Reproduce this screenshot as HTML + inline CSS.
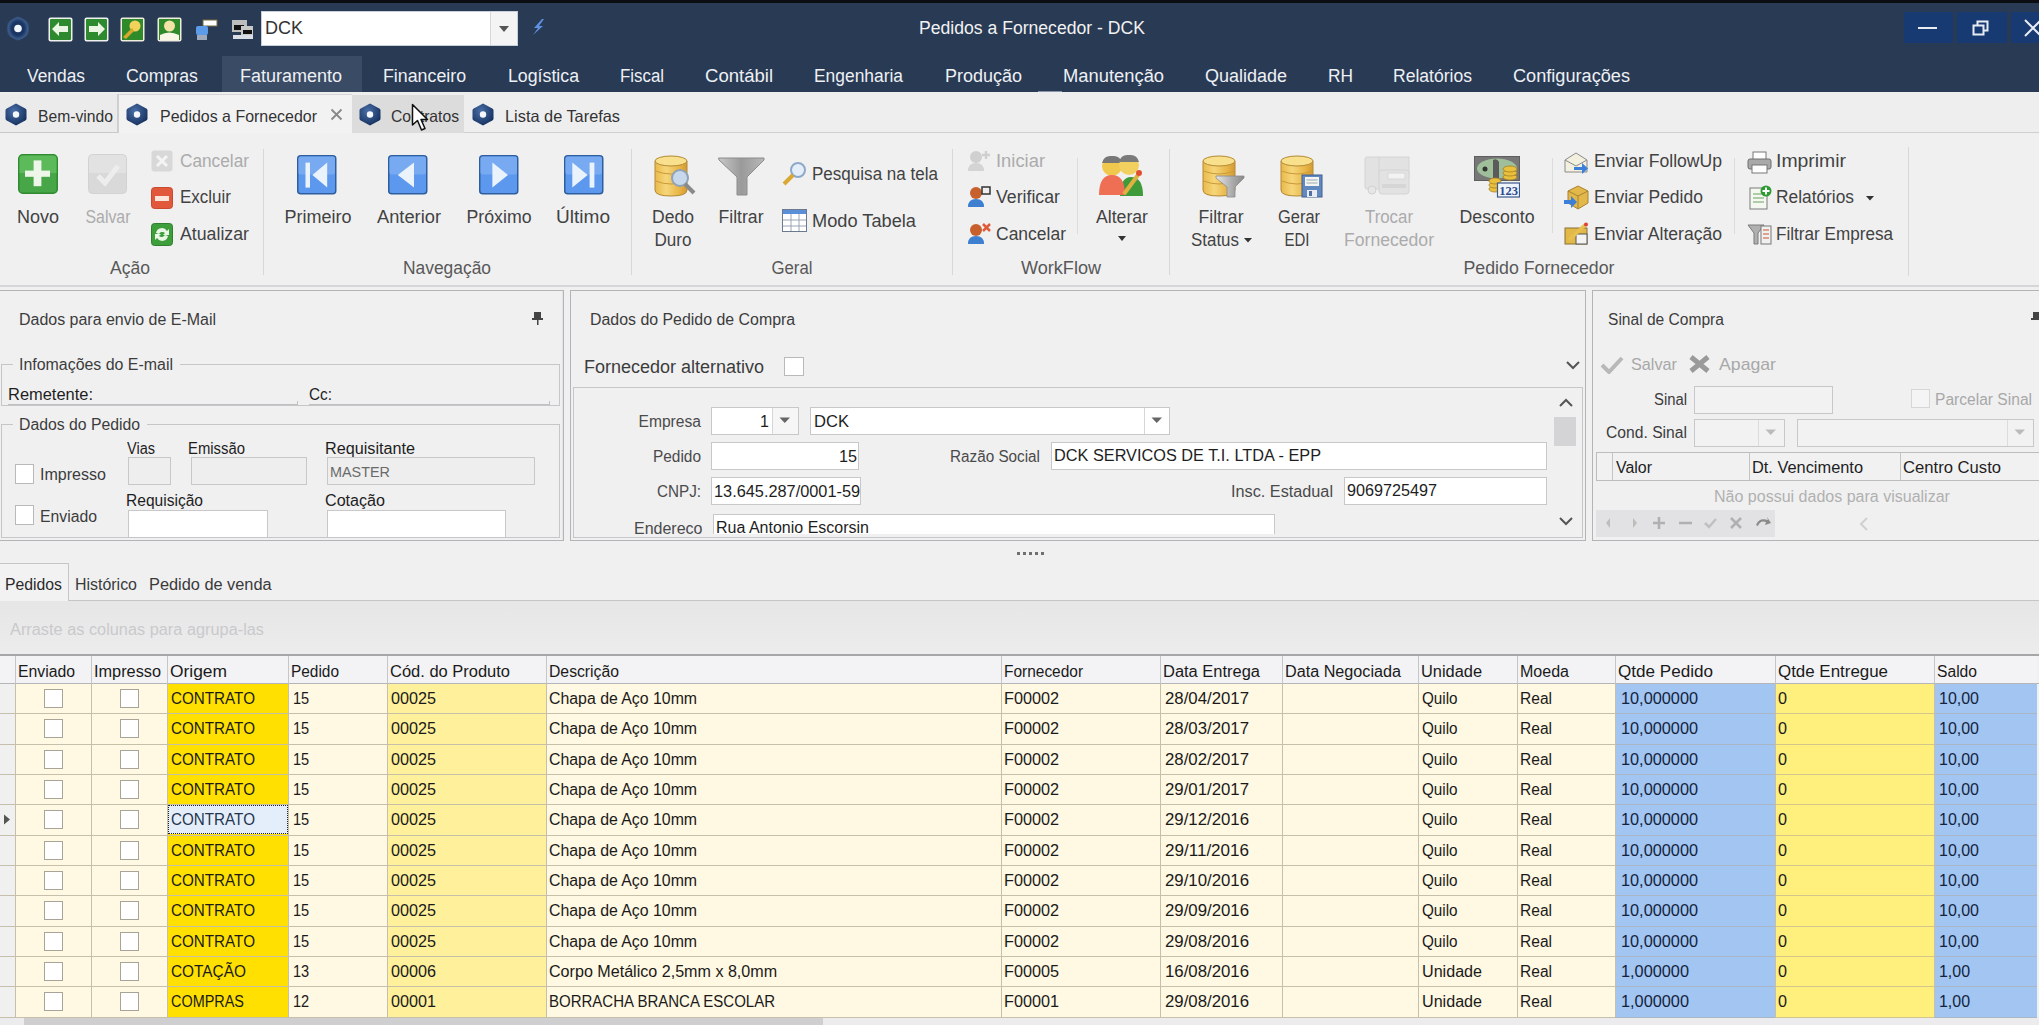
<!DOCTYPE html>
<html><head><meta charset="utf-8"><title>Pedidos a Fornecedor - DCK</title>
<style>
html,body{margin:0;padding:0;}
body{width:2039px;height:1025px;overflow:hidden;position:relative;background:#f0f0f0;font-family:"Liberation Sans",sans-serif;}
.r{position:absolute;box-sizing:border-box;}
.t{position:absolute;line-height:1;white-space:nowrap;}
</style></head><body>
<div class="r" style="left:0px;top:0px;width:2039px;height:3px;background:#0b0d12;"></div>
<div class="r" style="left:0px;top:3px;width:2039px;height:89px;background:#283a54;"></div>
<svg class="r" style="left:5px;top:15px;" width="26" height="27" viewBox="0 0 26 27"><defs><radialGradient id="ai" cx="0.5" cy="0.5" r="0.5"><stop offset="0.55" stop-color="#1a3563"/><stop offset="0.85" stop-color="#3b5c8c"/><stop offset="1" stop-color="#2b3d59"/></radialGradient></defs><polygon points="13,1 24.5,7.5 24.5,20 13,26 1.5,20 1.5,7.5" fill="url(#ai)"/><circle cx="13" cy="13.5" r="3.8" fill="#f2f6ff"/></svg>
<svg class="r" style="left:48px;top:17px;" width="25" height="25" viewBox="0 0 25 25"><rect x="0.5" y="0.5" width="24" height="24" rx="2" fill="#f0f0f0"/><rect x="2" y="2" width="21" height="21" rx="1" fill="#2e8a2e"/><path d="M4,12 L11,5 L11,9 L20,9 L20,15 L11,15 L11,19 Z" fill="#eaf5e4"/></svg>
<svg class="r" style="left:84px;top:17px;" width="25" height="25" viewBox="0 0 25 25"><rect x="0.5" y="0.5" width="24" height="24" rx="2" fill="#f0f0f0"/><rect x="2" y="2" width="21" height="21" rx="1" fill="#2e8a2e"/><path d="M21,12 L14,5 L14,9 L5,9 L5,15 L14,15 L14,19 Z" fill="#eaf5e4"/></svg>
<svg class="r" style="left:120px;top:17px;" width="25" height="25" viewBox="0 0 25 25"><rect x="0.5" y="0.5" width="24" height="24" rx="2" fill="#f0ece0"/><rect x="2" y="2" width="21" height="21" fill="#2f8a2a"/><circle cx="15" cy="9" r="5.5" fill="#f2d25a"/><path d="M12,11 L3,20 L6,22 L14,14 Z" fill="#d6a92c"/></svg>
<svg class="r" style="left:157px;top:17px;" width="25" height="25" viewBox="0 0 25 25"><rect x="0.5" y="0.5" width="24" height="24" rx="2" fill="#f0ece0"/><rect x="2" y="2" width="21" height="21" fill="#2f8a2a"/><circle cx="12.5" cy="9" r="5.5" fill="#f3e3a6"/><path d="M3,23 L3,18 Q12,13 22,18 L22,23 Z" fill="#fbf7e6"/></svg>
<svg class="r" style="left:194px;top:17px;" width="25" height="25" viewBox="0 0 25 25"><rect x="9" y="3" width="14" height="6" fill="#fff" stroke="#7a6a40" stroke-width="1"/><rect x="2" y="9" width="12" height="9" rx="2" fill="#5b9be8"/><rect x="3" y="18" width="10" height="5" fill="#bcc6d6" opacity="0.8"/></svg>
<svg class="r" style="left:230px;top:17px;" width="25" height="25" viewBox="0 0 25 25"><rect x="2" y="3" width="15" height="12" fill="#bdbdbd"/><rect x="4" y="8" width="10" height="5" fill="#111"/><rect x="11" y="9" width="12" height="10" fill="#c8c8c8"/><rect x="13" y="13" width="9" height="4" fill="#111"/><rect x="3" y="18" width="20" height="4" fill="#d8dde6"/></svg>
<div class="r" style="left:261px;top:11px;width:257px;height:35px;background:#fff;border:1px solid #c9cfd8;"></div>
<div class="r" style="left:490px;top:12px;width:27px;height:33px;background:#f4f4f4;border-left:1px solid #d7d7d7;"></div>
<svg class="r" style="left:498px;top:25px;" width="12" height="8" viewBox="0 0 12 8"><path d="M1,1 L11,1 L6,7 Z" fill="#555"/></svg>
<div class="t " style="left:265.0px;top:18.8px;font-size:18px;color:#333;">DCK</div>
<svg class="r" style="left:529px;top:18px;" width="19" height="18" viewBox="0 0 19 18"><path d="M13,1 L5,10 L9,10 L4,17 L14,8 L10,8 L15,1 Z" fill="#5e8fe0"/></svg>
<div class="t " style="left:919.0px;top:20.1px;font-size:17.6px;color:#f2f2f2;">Pedidos a Fornecedor - DCK</div>
<div class="r" style="left:1904px;top:12px;width:49px;height:31px;background:#173a72;"></div>
<div class="r" style="left:1957px;top:12px;width:50px;height:31px;background:#173a72;"></div>
<div class="r" style="left:2011px;top:12px;width:28px;height:31px;background:#173a72;"></div>
<div class="r" style="left:1918px;top:27px;width:19px;height:2px;background:#e8ecf2;"></div>
<svg class="r" style="left:1971px;top:19px;" width="20" height="18" viewBox="0 0 20 18"><rect x="2.5" y="6.5" width="10" height="9" fill="none" stroke="#e8ecf2" stroke-width="2"/><path d="M6.5,6.5 L6.5,2.5 L16.5,2.5 L16.5,11.5 L12.5,11.5" fill="none" stroke="#e8ecf2" stroke-width="2"/></svg>
<svg class="r" style="left:2023px;top:18px;" width="16" height="20" viewBox="0 0 16 20"><path d="M2,2 L18,18 M18,2 L2,18" stroke="#e8ecf2" stroke-width="2"/></svg>
<div class="r" style="left:222px;top:56px;width:140px;height:36px;background:#3a4b66;"></div>
<div class="t " style="left:27.0px;top:66.8px;font-size:18px;color:#eef0f4;transform:scaleX(0.966);transform-origin:0 0;">Vendas</div>
<div class="t " style="left:126.0px;top:66.8px;font-size:18px;color:#eef0f4;transform:scaleX(0.986);transform-origin:0 0;">Compras</div>
<div class="t " style="left:240.0px;top:66.8px;font-size:18px;color:#eef0f4;transform:scaleX(1.000);transform-origin:0 0;">Faturamento</div>
<div class="t " style="left:383.0px;top:66.8px;font-size:18px;color:#eef0f4;transform:scaleX(0.988);transform-origin:0 0;">Financeiro</div>
<div class="t " style="left:508.0px;top:66.8px;font-size:18px;color:#eef0f4;transform:scaleX(0.986);transform-origin:0 0;">Logística</div>
<div class="t " style="left:620.0px;top:66.8px;font-size:18px;color:#eef0f4;transform:scaleX(0.936);transform-origin:0 0;">Fiscal</div>
<div class="t " style="left:705.0px;top:66.8px;font-size:18px;color:#eef0f4;transform:scaleX(1.030);transform-origin:0 0;">Contábil</div>
<div class="t " style="left:814.0px;top:66.8px;font-size:18px;color:#eef0f4;transform:scaleX(0.967);transform-origin:0 0;">Engenharia</div>
<div class="t " style="left:945.0px;top:66.8px;font-size:18px;color:#eef0f4;transform:scaleX(0.999);transform-origin:0 0;">Produção</div>
<div class="t " style="left:1063.0px;top:66.8px;font-size:18px;color:#eef0f4;transform:scaleX(1.020);transform-origin:0 0;">Manutenção</div>
<div class="t " style="left:1205.0px;top:66.8px;font-size:18px;color:#eef0f4;transform:scaleX(0.999);transform-origin:0 0;">Qualidade</div>
<div class="t " style="left:1328.0px;top:66.8px;font-size:18px;color:#eef0f4;transform:scaleX(0.962);transform-origin:0 0;">RH</div>
<div class="t " style="left:1393.0px;top:66.8px;font-size:18px;color:#eef0f4;transform:scaleX(0.975);transform-origin:0 0;">Relatórios</div>
<div class="t " style="left:1513.0px;top:66.8px;font-size:18px;color:#eef0f4;transform:scaleX(1.008);transform-origin:0 0;">Configurações</div>
<div class="r" style="left:1038px;top:91px;width:24px;height:1px;background:#8a96a8;"></div>
<div class="r" style="left:0px;top:92px;width:2039px;height:41px;background:#eeeeef;border-bottom:1px solid #cfcfd2;"></div>
<div class="r" style="left:0px;top:94px;width:118px;height:39px;background:#ebebec;border-right:1px solid #cfcfd2;border-bottom:1px solid #c9c9cc;"></div>
<div class="r" style="left:118px;top:94px;width:234px;height:40px;background:#f2f2f3;border-left:1px solid #d0d0d3;border-top:1px solid #d6d6d9;"></div>
<div class="r" style="left:352px;top:95px;width:112px;height:38px;background:#dcdcdd;"></div>
<svg class="r" style="left:5px;top:103px;" width="22" height="23" viewBox="0 0 22 23"><defs><radialGradient id="hx" cx="0.4" cy="0.35" r="0.7"><stop offset="0" stop-color="#4a6fa8"/><stop offset="1" stop-color="#142f5c"/></radialGradient></defs><path d="M11,0.5 L20.3,5.6 Q21.5,6.3 21.5,7.6 L21.5,15.4 Q21.5,16.7 20.3,17.4 L11,22.5 L1.7,17.4 Q0.5,16.7 0.5,15.4 L0.5,7.6 Q0.5,6.3 1.7,5.6 Z" fill="url(#hx)"/><circle cx="11" cy="11.5" r="3.2" fill="#f4f7fc"/></svg>
<svg class="r" style="left:126px;top:103px;" width="22" height="23" viewBox="0 0 22 23"><defs><radialGradient id="hx" cx="0.4" cy="0.35" r="0.7"><stop offset="0" stop-color="#4a6fa8"/><stop offset="1" stop-color="#142f5c"/></radialGradient></defs><path d="M11,0.5 L20.3,5.6 Q21.5,6.3 21.5,7.6 L21.5,15.4 Q21.5,16.7 20.3,17.4 L11,22.5 L1.7,17.4 Q0.5,16.7 0.5,15.4 L0.5,7.6 Q0.5,6.3 1.7,5.6 Z" fill="url(#hx)"/><circle cx="11" cy="11.5" r="3.2" fill="#f4f7fc"/></svg>
<svg class="r" style="left:359px;top:103px;" width="22" height="23" viewBox="0 0 22 23"><defs><radialGradient id="hx" cx="0.4" cy="0.35" r="0.7"><stop offset="0" stop-color="#4a6fa8"/><stop offset="1" stop-color="#142f5c"/></radialGradient></defs><path d="M11,0.5 L20.3,5.6 Q21.5,6.3 21.5,7.6 L21.5,15.4 Q21.5,16.7 20.3,17.4 L11,22.5 L1.7,17.4 Q0.5,16.7 0.5,15.4 L0.5,7.6 Q0.5,6.3 1.7,5.6 Z" fill="url(#hx)"/><circle cx="11" cy="11.5" r="3.2" fill="#f4f7fc"/></svg>
<svg class="r" style="left:472px;top:103px;" width="22" height="23" viewBox="0 0 22 23"><defs><radialGradient id="hx" cx="0.4" cy="0.35" r="0.7"><stop offset="0" stop-color="#4a6fa8"/><stop offset="1" stop-color="#142f5c"/></radialGradient></defs><path d="M11,0.5 L20.3,5.6 Q21.5,6.3 21.5,7.6 L21.5,15.4 Q21.5,16.7 20.3,17.4 L11,22.5 L1.7,17.4 Q0.5,16.7 0.5,15.4 L0.5,7.6 Q0.5,6.3 1.7,5.6 Z" fill="url(#hx)"/><circle cx="11" cy="11.5" r="3.2" fill="#f4f7fc"/></svg>
<div class="t " style="left:38.0px;top:108.0px;font-size:16.5px;color:#333;transform:scaleX(0.951);transform-origin:0 0;">Bem-vindo</div>
<div class="t " style="left:160.0px;top:108.0px;font-size:16.5px;color:#333;transform:scaleX(0.967);transform-origin:0 0;">Pedidos a Fornecedor</div>
<svg class="r" style="left:330px;top:108px;" width="13" height="13" viewBox="0 0 13 13"><path d="M1.5,1.5 L11.5,11.5 M11.5,1.5 L1.5,11.5" stroke="#888" stroke-width="1.8"/></svg>
<div class="t " style="left:391.0px;top:108.0px;font-size:16.5px;color:#333;transform:scaleX(0.951);transform-origin:0 0;">Contratos</div>
<div class="t " style="left:505.0px;top:108.0px;font-size:16.5px;color:#333;transform:scaleX(0.990);transform-origin:0 0;">Lista de Tarefas</div>
<svg class="r" style="left:411px;top:103px;" width="20" height="30" viewBox="0 0 20 30"><path d="M1.5,1.5 L1.5,22 L6.5,17.5 L10.5,27 L14,25.5 L10,16.5 L16.5,16.5 Z" fill="#fff" stroke="#111" stroke-width="1.5" stroke-linejoin="round"/></svg>
<div class="r" style="left:0px;top:133px;width:2039px;height:153px;background:#f0f0f1;"></div>
<div class="r" style="left:0px;top:285px;width:2039px;height:2px;background:#d6d6d8;"></div>
<div class="r" style="left:263px;top:149px;width:1px;height:126px;background:#d8d8da;"></div>
<div class="r" style="left:631px;top:149px;width:1px;height:126px;background:#d8d8da;"></div>
<div class="r" style="left:952px;top:149px;width:1px;height:126px;background:#d8d8da;"></div>
<div class="r" style="left:1169px;top:149px;width:1px;height:126px;background:#d8d8da;"></div>
<div class="r" style="left:1908px;top:147px;width:1px;height:129px;background:#d8d8da;"></div>
<div class="r" style="left:1077px;top:158px;width:1px;height:76px;background:#dcdcde;"></div>
<div class="r" style="left:1552px;top:158px;width:1px;height:75px;background:#dcdcde;"></div>
<div class="r" style="left:1734px;top:158px;width:1px;height:76px;background:#dcdcde;"></div>
<svg class="r" style="left:18px;top:154px;" width="40" height="40" viewBox="0 0 40 40"><rect x="0.75" y="0.75" width="38.5" height="38.5" rx="4" fill="#47a647" stroke="#2f8a31" stroke-width="1.5"/><path d="M1.5,5 Q1.5,1.5 5,1.5 L35,1.5 Q38.5,1.5 38.5,5 L38.5,19 L1.5,19 Z" fill="#5cba5b"/><rect x="15.6" y="6.4" width="7.8" height="25.8" fill="#eef6ea"/><rect x="7" y="16.6" width="25" height="6.2" fill="#eef6ea"/></svg>
<svg class="r" style="left:88px;top:154px;" width="39" height="40" viewBox="0 0 39 40"><rect x="0.5" y="0.5" width="38" height="39" rx="4" fill="#d9d9d9" stroke="#d2d2d2"/><path d="M1,5 Q1,1 5,1 L34,1 Q38,1 38,5 L38,19 L1,19 Z" fill="#e2e2e2"/><path d="M10,22 L17,29 L30,12" stroke="#ededed" stroke-width="5" fill="none"/></svg>
<div class="t " style="left:-112.0px;width:300px;text-align:center;top:209.4px;font-size:17.5px;color:#424242;transform:scaleX(1.028);transform-origin:50% 0;">Novo</div>
<div class="t " style="left:-42.0px;width:300px;text-align:center;top:209.4px;font-size:17.5px;color:#ababab;transform:scaleX(0.907);transform-origin:50% 0;">Salvar</div>
<svg class="r" style="left:151px;top:150px;" width="22" height="22" viewBox="0 0 22 22"><rect x="0.5" y="0.5" width="21" height="21" rx="3" fill="#d8d8d8"/><path d="M6,6 L16,16 M16,6 L6,16" stroke="#f4f4f4" stroke-width="3"/></svg>
<svg class="r" style="left:151px;top:187px;" width="22" height="22" viewBox="0 0 22 22"><rect x="0.5" y="0.5" width="21" height="21" rx="3" fill="#e2583a" stroke="#c84a30"/><rect x="4" y="9" width="14" height="5" fill="#fbe6dc"/></svg>
<svg class="r" style="left:151px;top:223px;" width="22" height="23" viewBox="0 0 22 23"><rect x="0.5" y="0.5" width="21" height="22" rx="3" fill="#3e9e3c" stroke="#2e7f2e"/><path d="M5,10 A6,6 0 0 1 16,8 L18,6 L18,12 L12,12 L14,10 A4,4 0 0 0 8,11 Z M17,13 A6,6 0 0 1 6,15 L4,17 L4,11 L10,11 L8,13 A4,4 0 0 0 14,12 Z" fill="#eaf6e6"/></svg>
<div class="t " style="left:179.5px;top:153.4px;font-size:17.5px;color:#ababab;transform:scaleX(0.985);transform-origin:0 0;">Cancelar</div>
<div class="t " style="left:179.5px;top:189.4px;font-size:17.5px;color:#424242;transform:scaleX(0.971);transform-origin:0 0;">Excluir</div>
<div class="t " style="left:179.5px;top:225.9px;font-size:17.5px;color:#424242;transform:scaleX(1.013);transform-origin:0 0;">Atualizar</div>
<div class="t " style="left:-20.5px;width:300px;text-align:center;top:260.4px;font-size:17.5px;color:#585858;transform:scaleX(1.003);transform-origin:50% 0;">Ação</div>
<svg class="r" style="left:297px;top:155px;" width="40" height="40" viewBox="0 0 40 40"><rect x="0.75" y="0.75" width="38" height="38" rx="3" fill="#5b98ee" stroke="#2f5e9e" stroke-width="1.5"/><rect x="1.5" y="1.5" width="36.5" height="18" rx="2" fill="#78aaf2"/><rect x="8.5" y="7.6" width="4.5" height="25" fill="#eaf2fc"/><path d="M15.4,20 L30.2,7.6 L30.2,32.6 Z" fill="#eaf2fc"/></svg>
<div class="t " style="left:167.5px;width:300px;text-align:center;top:209.4px;font-size:17.5px;color:#424242;transform:scaleX(1.028);transform-origin:50% 0;">Primeiro</div>
<svg class="r" style="left:388px;top:155px;" width="40" height="40" viewBox="0 0 40 40"><rect x="0.75" y="0.75" width="38" height="38" rx="3" fill="#5b98ee" stroke="#2f5e9e" stroke-width="1.5"/><rect x="1.5" y="1.5" width="36.5" height="18" rx="2" fill="#78aaf2"/><path d="M9.8,20 L26,7.6 L26,32.6 Z" fill="#eaf2fc"/></svg>
<div class="t " style="left:258.6px;width:300px;text-align:center;top:209.4px;font-size:17.5px;color:#424242;transform:scaleX(1.045);transform-origin:50% 0;">Anterior</div>
<svg class="r" style="left:479px;top:155px;" width="40" height="40" viewBox="0 0 40 40"><rect x="0.75" y="0.75" width="38" height="38" rx="3" fill="#5b98ee" stroke="#2f5e9e" stroke-width="1.5"/><rect x="1.5" y="1.5" width="36.5" height="18" rx="2" fill="#78aaf2"/><path d="M13.4,7.6 L13.4,32.6 L29,20 Z" fill="#eaf2fc"/></svg>
<div class="t " style="left:348.5px;width:300px;text-align:center;top:209.4px;font-size:17.5px;color:#424242;transform:scaleX(1.013);transform-origin:50% 0;">Próximo</div>
<svg class="r" style="left:564px;top:155px;" width="40" height="40" viewBox="0 0 40 40"><rect x="0.75" y="0.75" width="38" height="38" rx="3" fill="#5b98ee" stroke="#2f5e9e" stroke-width="1.5"/><rect x="1.5" y="1.5" width="36.5" height="18" rx="2" fill="#78aaf2"/><path d="M8.3,7.6 L8.3,32.6 L23.7,20 Z" fill="#eaf2fc"/><rect x="25.6" y="7.6" width="4.8" height="25" fill="#eaf2fc"/></svg>
<div class="t " style="left:433.0px;width:300px;text-align:center;top:209.4px;font-size:17.5px;color:#424242;transform:scaleX(1.089);transform-origin:50% 0;">Último</div>
<div class="t " style="left:296.5px;width:300px;text-align:center;top:260.4px;font-size:17.5px;color:#585858;transform:scaleX(0.994);transform-origin:50% 0;">Navegação</div>
<svg class="r" style="left:654px;top:154px;" width="43" height="43" viewBox="0 0 43 43"><defs><linearGradient id="gdb" x1="0" y1="0" x2="1" y2="0"><stop offset="0" stop-color="#e9b94a"/><stop offset="0.35" stop-color="#f6d67a"/><stop offset="0.75" stop-color="#e8b648"/><stop offset="1" stop-color="#d49a32"/></linearGradient></defs><path d="M1,7 L1,36 Q1,42 17,42 Q33,42 33,36 L33,7 Z" fill="url(#gdb)" stroke="#b48a36"/><path d="M1.5,17 Q17,23 32.5,17 M1.5,27 Q17,33 32.5,27" fill="none" stroke="#c99a3c" stroke-width="1"/><ellipse cx="17" cy="7" rx="16" ry="5" fill="#f8e08c" stroke="#b48a36"/><circle cx="26" cy="24" r="8" fill="#c8d8ec" stroke="#8fa2b8" stroke-width="2"/><path d="M31,30 L40,39" stroke="#8a8a8a" stroke-width="4"/></svg>
<div class="t " style="left:523.0px;width:300px;text-align:center;top:209.4px;font-size:17.5px;color:#424242;transform:scaleX(1.004);transform-origin:50% 0;">Dedo</div>
<div class="t " style="left:523.0px;width:300px;text-align:center;top:231.9px;font-size:17.5px;color:#424242;transform:scaleX(0.976);transform-origin:50% 0;">Duro</div>
<svg class="r" style="left:718px;top:157px;" width="47" height="39" viewBox="0 0 47 39"><defs><linearGradient id="gf" x1="0" y1="0" x2="1" y2="0"><stop offset="0" stop-color="#c9c9c9"/><stop offset="0.5" stop-color="#9a9a9a"/><stop offset="1" stop-color="#b8b8b8"/></linearGradient></defs><path d="M0.5,1 L46,1 L46,3 L29,20 L29,38 L19,38 L19,20 L1,3 Z" fill="url(#gf)" stroke="#8c8c8c"/></svg>
<div class="t " style="left:591.0px;width:300px;text-align:center;top:209.4px;font-size:17.5px;color:#424242;transform:scaleX(1.006);transform-origin:50% 0;">Filtrar</div>
<svg class="r" style="left:782px;top:161px;" width="25" height="25" viewBox="0 0 25 25"><circle cx="16" cy="9" r="7" fill="#e4eef9" stroke="#8ea9c8" stroke-width="2"/><path d="M11,14 L2,23" stroke="#d9a934" stroke-width="4"/></svg>
<div class="t " style="left:811.5px;top:166.4px;font-size:17.5px;color:#424242;transform:scaleX(0.974);transform-origin:0 0;">Pesquisa na tela</div>
<svg class="r" style="left:782px;top:209px;" width="25" height="23" viewBox="0 0 25 23"><rect x="0.5" y="0.5" width="24" height="22" fill="#fff" stroke="#6b7a8c"/><rect x="1" y="1" width="23" height="4" fill="#5a8fd8"/><path d="M1,11 H24 M1,17 H24 M9,5 V22 M17,5 V22" stroke="#9aa5b2"/></svg>
<div class="t " style="left:811.5px;top:213.4px;font-size:17.5px;color:#424242;transform:scaleX(1.041);transform-origin:0 0;">Modo Tabela</div>
<div class="t " style="left:642.0px;width:300px;text-align:center;top:260.4px;font-size:17.5px;color:#585858;transform:scaleX(0.958);transform-origin:50% 0;">Geral</div>
<svg class="r" style="left:967px;top:150px;" width="24" height="22" viewBox="0 0 24 22"><g opacity="1"><circle cx="9" cy="7" r="6" fill="#d0d0d0"/><path d="M1,21 Q1,13 9,13 Q17,13 17,21 Z" fill="#d4d4d4"/><path d="M19,1 V9 M15,5 H23" stroke="#cfcfcf" stroke-width="2.5"/></g></svg>
<svg class="r" style="left:967px;top:186px;" width="24" height="22" viewBox="0 0 24 22"><circle cx="9" cy="7" r="6" fill="#c8602e"/><path d="M1,21 Q1,13 9,13 Q17,13 17,21 Z" fill="#3f7fd0"/><rect x="15" y="1" width="8" height="7" fill="#eee" stroke="#333" stroke-width="1.5"/></svg>
<svg class="r" style="left:967px;top:223px;" width="24" height="22" viewBox="0 0 24 22"><circle cx="9" cy="7" r="6" fill="#c8602e"/><path d="M1,21 Q1,13 9,13 Q17,13 17,21 Z" fill="#3f7fd0"/><path d="M16,1 L23,8 M23,1 L16,8" stroke="#e05a3a" stroke-width="2.5"/></svg>
<div class="t " style="left:996.0px;top:153.4px;font-size:17.5px;color:#ababab;transform:scaleX(1.050);transform-origin:0 0;">Iniciar</div>
<div class="t " style="left:996.0px;top:189.4px;font-size:17.5px;color:#424242;transform:scaleX(1.012);transform-origin:0 0;">Verificar</div>
<div class="t " style="left:996.0px;top:226.4px;font-size:17.5px;color:#424242;transform:scaleX(1.000);transform-origin:0 0;">Cancelar</div>
<svg class="r" style="left:1098px;top:153px;" width="49" height="45" viewBox="0 0 49 45"><circle cx="14" cy="13" r="10" fill="#f0c84e"/><path d="M4,10 Q6,2 14,3 Q22,2 24,10 Z" fill="#777"/><circle cx="31" cy="12" r="10" fill="#f2d060"/><path d="M21,9 Q23,1 31,2 Q39,1 41,9 Z" fill="#7a7a7a"/><path d="M22,43 Q22,24 33,24 Q45,24 45,43 Z" fill="#3f9a3a"/><path d="M1,42 Q1,22 14,22 Q27,22 27,42 Z" fill="#ef6f55"/><path d="M26,41 L40,22" stroke="#e0b040" stroke-width="4"/><circle cx="41" cy="20" r="3" fill="#e05030"/></svg>
<div class="t " style="left:972.0px;width:300px;text-align:center;top:208.9px;font-size:17.5px;color:#424242;transform:scaleX(1.009);transform-origin:50% 0;">Alterar</div>
<svg class="r" style="left:1118px;top:236px;" width="9" height="6" viewBox="0 0 9 6"><path d="M0,0 L8,0 L4,5 Z" fill="#333"/></svg>
<div class="t " style="left:911.0px;width:300px;text-align:center;top:260.4px;font-size:17.5px;color:#585858;transform:scaleX(1.033);transform-origin:50% 0;">WorkFlow</div>
<svg class="r" style="left:1202px;top:154px;" width="43" height="44" viewBox="0 0 43 44"><defs><linearGradient id="gdb" x1="0" y1="0" x2="1" y2="0"><stop offset="0" stop-color="#e9b94a"/><stop offset="0.35" stop-color="#f6d67a"/><stop offset="0.75" stop-color="#e8b648"/><stop offset="1" stop-color="#d49a32"/></linearGradient></defs><path d="M1,7 L1,36 Q1,42 17,42 Q33,42 33,36 L33,7 Z" fill="url(#gdb)" stroke="#b48a36"/><path d="M1.5,17 Q17,23 32.5,17 M1.5,27 Q17,33 32.5,27" fill="none" stroke="#c99a3c" stroke-width="1"/><ellipse cx="17" cy="7" rx="16" ry="5" fill="#f8e08c" stroke="#b48a36"/><defs><linearGradient id="gfs" x1="0" y1="0" x2="1" y2="0"><stop offset="0" stop-color="#e6e6e6"/><stop offset="0.6" stop-color="#a9a9a9"/><stop offset="1" stop-color="#8a8a8a"/></linearGradient></defs><path d="M14,22 L42,22 L42,24 L33,33 L33,43 L25,43 L25,33 L14,24 Z" fill="url(#gfs)" stroke="#8a8a8a" stroke-width="0.8"/></svg>
<div class="t " style="left:1071.0px;width:300px;text-align:center;top:209.4px;font-size:17.5px;color:#424242;transform:scaleX(1.006);transform-origin:50% 0;">Filtrar</div>
<div class="t " style="left:1065.0px;width:300px;text-align:center;top:231.9px;font-size:17.5px;color:#424242;transform:scaleX(0.968);transform-origin:50% 0;">Status</div>
<svg class="r" style="left:1244px;top:238px;" width="9" height="5" viewBox="0 0 9 5"><path d="M0,0 L8,0 L4,4.5 Z" fill="#333"/></svg>
<svg class="r" style="left:1280px;top:154px;" width="43" height="44" viewBox="0 0 43 44"><defs><linearGradient id="gdb" x1="0" y1="0" x2="1" y2="0"><stop offset="0" stop-color="#e9b94a"/><stop offset="0.35" stop-color="#f6d67a"/><stop offset="0.75" stop-color="#e8b648"/><stop offset="1" stop-color="#d49a32"/></linearGradient></defs><path d="M1,7 L1,36 Q1,42 17,42 Q33,42 33,36 L33,7 Z" fill="url(#gdb)" stroke="#b48a36"/><path d="M1.5,17 Q17,23 32.5,17 M1.5,27 Q17,33 32.5,27" fill="none" stroke="#c99a3c" stroke-width="1"/><ellipse cx="17" cy="7" rx="16" ry="5" fill="#f8e08c" stroke="#b48a36"/><rect x="22" y="21" width="20" height="22" fill="#6288c0" stroke="#3f5f90"/><rect x="25" y="23" width="14" height="9" fill="#f4f4f4"/><path d="M26.5,26 H37.5 M26.5,29 H37.5" stroke="#9aa"/><rect x="27" y="36" width="10" height="7" fill="#e8ecf2"/><rect x="29" y="37" width="3" height="5" fill="#5070a0"/></svg>
<div class="t " style="left:1148.5px;width:300px;text-align:center;top:209.4px;font-size:17.5px;color:#424242;transform:scaleX(0.939);transform-origin:50% 0;">Gerar</div>
<div class="t " style="left:1147.0px;width:300px;text-align:center;top:231.9px;font-size:17.5px;color:#424242;transform:scaleX(0.857);transform-origin:50% 0;">EDI</div>
<svg class="r" style="left:1364px;top:156px;" width="47" height="40" viewBox="0 0 47 40"><g fill="#e2e2e2" stroke="#d4d4d4"><rect x="1" y="1" width="15" height="32" rx="2"/><rect x="15" y="1" width="30" height="20"/><rect x="15" y="14" width="30" height="24" rx="3"/></g><rect x="24" y="17" width="17" height="6" fill="#f2f2f2" stroke="#d8d8d8"/><rect x="18" y="28" width="24" height="4" fill="#d6d6d6"/><circle cx="8" cy="34" r="4" fill="#e6e6e6" stroke="#d0d0d0"/></svg>
<div class="t " style="left:1239.0px;width:300px;text-align:center;top:209.4px;font-size:17.5px;color:#ababab;transform:scaleX(0.962);transform-origin:50% 0;">Trocar</div>
<div class="t " style="left:1239.0px;width:300px;text-align:center;top:231.9px;font-size:17.5px;color:#ababab;transform:scaleX(1.006);transform-origin:50% 0;">Fornecedor</div>
<svg class="r" style="left:1474px;top:156px;" width="46" height="42" viewBox="0 0 46 42"><rect x="0.5" y="0.5" width="45" height="24" fill="#777" stroke="#5e5e5e"/><ellipse cx="23" cy="12.5" rx="20" ry="10" fill="#9fbf9a"/><circle cx="11" cy="13" r="2.5" fill="#333"/><path d="M19,4 Q23,2 25,6 L25,22 L19,22 Z" fill="#5a5a5a"/><g fill="#e9bf3e" stroke="#a7801e" stroke-width="0.8"><ellipse cx="36" cy="21" rx="7" ry="3"/><ellipse cx="36" cy="17" rx="7" ry="3"/><ellipse cx="36" cy="13" rx="7" ry="3"/><ellipse cx="21" cy="33" rx="6" ry="3"/><ellipse cx="21" cy="29" rx="6" ry="3"/><ellipse cx="21" cy="25" rx="6" ry="3"/></g><rect x="23.5" y="27" width="22" height="14" fill="#eef4fc" stroke="#3d5a8a" stroke-width="1.2"/><text x="34.5" y="39" font-size="12.5" font-weight="bold" text-anchor="middle" fill="#2c4a8a" font-family="Liberation Serif">123</text></svg>
<div class="t " style="left:1346.5px;width:300px;text-align:center;top:209.4px;font-size:17.5px;color:#424242;transform:scaleX(1.015);transform-origin:50% 0;">Desconto</div>
<svg class="r" style="left:1564px;top:151px;" width="25" height="23" viewBox="0 0 25 23"><path d="M1,9 L12,2 L23,9 L23,21 L1,21 Z" fill="#f4f0e0" stroke="#8a8a8a"/><path d="M1,9 L12,15 L23,9" fill="none" stroke="#8a8a8a"/><path d="M10,16 L18,16 L18,12 L24,17.5 L18,23 L18,19 L10,19 Z" fill="#3b7fd8"/></svg>
<svg class="r" style="left:1564px;top:185px;" width="25" height="25" viewBox="0 0 25 25"><path d="M4,6 L14,1 L24,6 L24,18 L14,24 L4,18 Z" fill="#e3b84a" stroke="#a88230"/><path d="M4,6 L14,11 L24,6 M14,11 V24" fill="none" stroke="#a88230"/><path d="M0,15 L7,15 L7,11 L13,17 L7,23 L7,19 L0,19 Z" fill="#3b7fd8"/></svg>
<svg class="r" style="left:1564px;top:222px;" width="25" height="23" viewBox="0 0 25 23"><rect x="1" y="6" width="22" height="16" fill="#e3b84a" stroke="#8a7030"/><rect x="12" y="12" width="11" height="10" fill="#f3f3f3" stroke="#555"/><path d="M5,18 L21,3" stroke="#e8c050" stroke-width="3.5"/><circle cx="22" cy="2.5" r="2" fill="#e04030"/></svg>
<div class="t " style="left:1594.0px;top:153.4px;font-size:17.5px;color:#424242;transform:scaleX(1.005);transform-origin:0 0;">Enviar FollowUp</div>
<div class="t " style="left:1594.0px;top:189.4px;font-size:17.5px;color:#424242;transform:scaleX(1.000);transform-origin:0 0;">Enviar Pedido</div>
<div class="t " style="left:1594.0px;top:225.9px;font-size:17.5px;color:#424242;transform:scaleX(1.005);transform-origin:0 0;">Enviar Alteração</div>
<svg class="r" style="left:1747px;top:151px;" width="25" height="23" viewBox="0 0 25 23"><rect x="6" y="1" width="13" height="8" fill="#fff" stroke="#777"/><rect x="1" y="8" width="23" height="10" rx="2" fill="#a9a9a9" stroke="#6f6f6f"/><rect x="5" y="14" width="15" height="8" fill="#fff" stroke="#777"/></svg>
<svg class="r" style="left:1747px;top:185px;" width="25" height="25" viewBox="0 0 25 25"><rect x="3" y="3" width="17" height="21" fill="#f4f8f0" stroke="#7a7a7a"/><path d="M6,9 H17 M6,13 H17 M6,17 H17" stroke="#6aa060"/><circle cx="19" cy="6" r="5.5" fill="#2e9a32"/><path d="M19,2.5 V9.5 M15.5,6 H22.5" stroke="#fff" stroke-width="2"/></svg>
<svg class="r" style="left:1747px;top:222px;" width="25" height="25" viewBox="0 0 25 25"><path d="M1,3 L17,3 L11,11 L11,22 L7,22 L7,11 Z" fill="#b0b0b0" stroke="#7a7a7a"/><rect x="14" y="4" width="10" height="18" fill="#f0f0f0" stroke="#777"/><path d="M16,8 H22 M16,12 H22 M16,16 H22" stroke="#d05030"/></svg>
<div class="t " style="left:1776.0px;top:153.4px;font-size:17.5px;color:#424242;transform:scaleX(1.108);transform-origin:0 0;">Imprimir</div>
<div class="t " style="left:1776.0px;top:189.4px;font-size:17.5px;color:#424242;transform:scaleX(0.990);transform-origin:0 0;">Relatórios</div>
<svg class="r" style="left:1866px;top:196px;" width="9" height="5" viewBox="0 0 9 5"><path d="M0,0 L8,0 L4,4.5 Z" fill="#333"/></svg>
<div class="t " style="left:1776.0px;top:225.9px;font-size:17.5px;color:#424242;transform:scaleX(0.978);transform-origin:0 0;">Filtrar Empresa</div>
<div class="t " style="left:1389.0px;width:300px;text-align:center;top:260.4px;font-size:17.5px;color:#585858;transform:scaleX(1.015);transform-origin:50% 0;">Pedido Fornecedor</div>
<div class="r" style="left:0px;top:287px;width:2039px;height:278px;background:#f0f0f1;"></div>
<div class="r" style="left:0px;top:290px;width:564px;height:251px;border:1px solid #b4b4b6;border-left:none;box-shadow:inset -1px 0 0 #e4e4e6;"></div>
<div class="r" style="left:570px;top:290px;width:1016px;height:251px;border:1px solid #b4b4b6;"></div>
<div class="r" style="left:1592px;top:290px;width:470px;height:251px;border:1px solid #b4b4b6;"></div>
<div class="t " style="left:18.5px;top:311.5px;font-size:16px;color:#3c3c3c;transform:scaleX(0.998);transform-origin:0 0;">Dados para envio de E-Mail</div>
<svg class="r" style="left:531px;top:311px;" width="13" height="14" viewBox="0 0 13 14"><rect x="3" y="1" width="7" height="7" fill="#444"/><rect x="1" y="7" width="11" height="2" fill="#444"/><rect x="6" y="9" width="1.5" height="5" fill="#444"/></svg>
<div class="r" style="left:1px;top:364px;width:559px;height:42px;border:1px solid #c6c6c8;border-top:none;"></div>
<div class="r" style="left:1px;top:364px;width:12px;height:1px;background:#c6c6c8;"></div>
<div class="r" style="left:180px;top:364px;width:380px;height:1px;background:#c6c6c8;"></div>
<div class="t " style="left:18.5px;top:356.5px;font-size:16px;color:#3c3c3c;transform:scaleX(0.995);transform-origin:0 0;">Infomações do E-mail</div>
<div class="t " style="left:8.0px;top:386.5px;font-size:16px;color:#1e1e1e;transform:scaleX(1.028);transform-origin:0 0;">Remetente:</div>
<div class="r" style="left:8px;top:404px;width:289px;height:1px;background:#c0c0c2;"></div>
<div class="r" style="left:297px;top:401px;width:10px;height:4px;border-left:1px solid #c0c0c2;"></div>
<div class="t " style="left:308.6px;top:386.5px;font-size:16px;color:#1e1e1e;transform:scaleX(0.958);transform-origin:0 0;">Cc:</div>
<div class="r" style="left:309px;top:404px;width:241px;height:1px;background:#c0c0c2;"></div>
<div class="r" style="left:549px;top:401px;width:1px;height:4px;background:#c0c0c2;"></div>
<div class="r" style="left:1px;top:424px;width:559px;height:114px;border:1px solid #c6c6c8;border-top:none;"></div>
<div class="r" style="left:1px;top:424px;width:12px;height:1px;background:#c6c6c8;"></div>
<div class="r" style="left:147px;top:424px;width:413px;height:1px;background:#c6c6c8;"></div>
<div class="t " style="left:18.5px;top:416.5px;font-size:16px;color:#3c3c3c;transform:scaleX(0.986);transform-origin:0 0;">Dados do Pedido</div>
<div class="t " style="left:126.6px;top:440.5px;font-size:16px;color:#1e1e1e;transform:scaleX(0.908);transform-origin:0 0;">Vias</div>
<div class="t " style="left:188.0px;top:440.5px;font-size:16px;color:#1e1e1e;transform:scaleX(0.929);transform-origin:0 0;">Emissão</div>
<div class="t " style="left:325.0px;top:440.5px;font-size:16px;color:#1e1e1e;transform:scaleX(1.012);transform-origin:0 0;">Requisitante</div>
<div class="r" style="left:128px;top:457px;width:43px;height:28px;background:#eeeeee;border:1px solid #c8c8ca;"></div>
<div class="r" style="left:191px;top:457px;width:116px;height:28px;background:#eeeeee;border:1px solid #c8c8ca;"></div>
<div class="r" style="left:327px;top:457px;width:208px;height:28px;background:#eeeeee;border:1px solid #c8c8ca;"></div>
<div class="t " style="left:329.5px;top:464.3px;font-size:15px;color:#6a6a6a;transform:scaleX(0.960);transform-origin:0 0;">MASTER</div>
<div class="r" style="left:15px;top:464px;width:19px;height:20px;background:#fff;border:1px solid #b9b9bb;"></div>
<div class="t " style="left:39.8px;top:467.2px;font-size:16px;color:#3c3c3c;transform:scaleX(1.003);transform-origin:0 0;">Impresso</div>
<div class="r" style="left:15px;top:505px;width:19px;height:20px;background:#fff;border:1px solid #b9b9bb;"></div>
<div class="t " style="left:39.8px;top:508.5px;font-size:16px;color:#3c3c3c;transform:scaleX(0.986);transform-origin:0 0;">Enviado</div>
<div class="t " style="left:126.0px;top:492.8px;font-size:16px;color:#1e1e1e;transform:scaleX(0.973);transform-origin:0 0;">Requisição</div>
<div class="t " style="left:325.0px;top:492.8px;font-size:16px;color:#1e1e1e;transform:scaleX(1.007);transform-origin:0 0;">Cotação</div>
<div class="r" style="left:128px;top:510px;width:140px;height:27px;background:#fff;border:1px solid #c8c8ca;border-bottom:none;"></div>
<div class="r" style="left:327px;top:510px;width:179px;height:27px;background:#fff;border:1px solid #c8c8ca;border-bottom:none;"></div>
<div class="t " style="left:590.0px;top:311.5px;font-size:16px;color:#3c3c3c;transform:scaleX(0.994);transform-origin:0 0;">Dados do Pedido de Compra</div>
<div class="t " style="left:584.0px;top:358.3px;font-size:18px;color:#3c3c3c;transform:scaleX(1.000);transform-origin:0 0;">Fornecedor alternativo</div>
<div class="r" style="left:784px;top:357px;width:20px;height:19px;background:#fff;border:1px solid #b9b9bb;"></div>
<svg class="r" style="left:1565px;top:359px;" width="16" height="12" viewBox="0 0 16 12"><path d="M2,3 L8,9 L14,3" stroke="#555" stroke-width="2" fill="none"/></svg>
<div class="r" style="left:573px;top:387px;width:1010px;height:151px;border:1px solid #c6c6c8;"></div>
<div class="r" style="left:574px;top:388px;width:1008px;height:150px;overflow:hidden;"></div>
<div class="t " style="left:400.8px;width:300px;text-align:right;top:413.5px;font-size:16px;color:#4a4a4a;transform:scaleX(0.976);transform-origin:100% 0;">Empresa</div>
<div class="r" style="left:711px;top:407px;width:88px;height:28px;background:#fff;border:1px solid #c8c8ca;"></div>
<div class="r" style="left:772px;top:408px;width:26px;height:26px;background:#f6f6f6;border-left:1px solid #d6d6d8;"></div>
<svg class="r" style="left:779px;top:417px;" width="12" height="7" viewBox="0 0 12 7"><path d="M0.5,0.5 L11,0.5 L5.75,6 Z" fill="#666"/></svg>
<div class="t " style="left:469.0px;width:300px;text-align:right;top:413.5px;font-size:16px;color:#1e1e1e;">1</div>
<div class="r" style="left:810px;top:407px;width:360px;height:28px;background:#fff;border:1px solid #c8c8ca;"></div>
<div class="r" style="left:1144px;top:408px;width:25px;height:26px;background:#fff;border-left:1px solid #d6d6d8;"></div>
<svg class="r" style="left:1151px;top:417px;" width="12" height="7" viewBox="0 0 12 7"><path d="M0.5,0.5 L11,0.5 L5.75,6 Z" fill="#666"/></svg>
<div class="t " style="left:813.5px;top:413.0px;font-size:16.5px;color:#1e1e1e;transform:scaleX(1.005);transform-origin:0 0;">DCK</div>
<div class="t " style="left:400.8px;width:300px;text-align:right;top:448.5px;font-size:16px;color:#4a4a4a;transform:scaleX(0.964);transform-origin:100% 0;">Pedido</div>
<div class="r" style="left:711px;top:442px;width:148px;height:28px;background:#fff;border:1px solid #c8c8ca;"></div>
<div class="t " style="left:556.5px;width:300px;text-align:right;top:448.5px;font-size:16px;color:#1e1e1e;transform:scaleX(1.012);transform-origin:100% 0;">15</div>
<div class="t " style="left:740.0px;width:300px;text-align:right;top:448.5px;font-size:16px;color:#4a4a4a;transform:scaleX(0.955);transform-origin:100% 0;">Razão Social</div>
<div class="r" style="left:1051px;top:442px;width:496px;height:28px;background:#fff;border:1px solid #c8c8ca;"></div>
<div class="t " style="left:1054.0px;top:447.5px;font-size:16px;color:#1e1e1e;transform:scaleX(1.018);transform-origin:0 0;">DCK SERVICOS DE T.I. LTDA - EPP</div>
<div class="t " style="left:400.8px;width:300px;text-align:right;top:483.5px;font-size:16px;color:#4a4a4a;transform:scaleX(0.952);transform-origin:100% 0;">CNPJ:</div>
<div class="r" style="left:711px;top:477px;width:150px;height:28px;background:#fff;border:1px solid #c8c8ca;overflow:hidden;"></div>
<div class="r" style="left:712px;top:478px;width:148px;height:26px;overflow:hidden;"><div class="t" style="left:2px;top:5.5px;font-size:16px;color:#1e1e1e;transform:scaleX(1.02);transform-origin:0 0;">13.645.287/0001-59</div></div>
<div class="t " style="left:1032.7px;width:300px;text-align:right;top:484.0px;font-size:16px;color:#4a4a4a;transform:scaleX(1.015);transform-origin:100% 0;">Insc. Estadual</div>
<div class="r" style="left:1344px;top:477px;width:203px;height:28px;background:#fff;border:1px solid #c8c8ca;"></div>
<div class="t " style="left:1347.0px;top:482.5px;font-size:16px;color:#1e1e1e;transform:scaleX(1.012);transform-origin:0 0;">9069725497</div>
<div class="r" style="left:574px;top:510px;width:976px;height:24px;overflow:hidden;"><div class="r" style="left:139px;top:4px;width:562px;height:30px;background:#fff;border:1px solid #c8c8ca;"></div><div class="t" style="left:60px;top:11px;font-size:16px;color:#4a4a4a;transform:scaleX(1.0);transform-origin:0 0;">Endereco</div><div class="t" style="left:142px;top:10px;font-size:16px;color:#1e1e1e;transform:scaleX(1.0);transform-origin:0 0;">Rua Antonio Escorsin</div></div>
<svg class="r" style="left:1558px;top:397px;" width="16" height="12" viewBox="0 0 16 12"><path d="M2,9 L8,3 L14,9" stroke="#555" stroke-width="2" fill="none"/></svg>
<div class="r" style="left:1554px;top:417px;width:22px;height:29px;background:#d4d4d6;"></div>
<svg class="r" style="left:1558px;top:515px;" width="16" height="12" viewBox="0 0 16 12"><path d="M2,3 L8,9 L14,3" stroke="#555" stroke-width="2" fill="none"/></svg>
<div class="t " style="left:1608.0px;top:311.5px;font-size:16px;color:#3c3c3c;transform:scaleX(0.973);transform-origin:0 0;">Sinal de Compra</div>
<svg class="r" style="left:2030px;top:311px;" width="9" height="14" viewBox="0 0 9 14"><rect x="3" y="1" width="6" height="7" fill="#444"/><rect x="1" y="7" width="8" height="2" fill="#444"/></svg>
<svg class="r" style="left:1600px;top:355px;" width="24" height="19" viewBox="0 0 24 19"><path d="M2,10 L9,17 L22,3" stroke="#b8b8b8" stroke-width="4" fill="none"/></svg>
<div class="t " style="left:1631.0px;top:355.9px;font-size:17px;color:#a8a8a8;transform:scaleX(0.955);transform-origin:0 0;">Salvar</div>
<svg class="r" style="left:1688px;top:354px;" width="23" height="20" viewBox="0 0 23 20"><path d="M3,3 L20,17 M20,3 L3,17" stroke="#9a9a9a" stroke-width="5"/></svg>
<div class="t " style="left:1718.7px;top:355.9px;font-size:17px;color:#a8a8a8;transform:scaleX(1.040);transform-origin:0 0;">Apagar</div>
<div class="t " style="left:1386.8px;width:300px;text-align:right;top:391.5px;font-size:16px;color:#3c3c3c;transform:scaleX(0.928);transform-origin:100% 0;">Sinal</div>
<div class="r" style="left:1694px;top:386px;width:139px;height:28px;background:#f2f2f3;border:1px solid #c8c8ca;"></div>
<div class="r" style="left:1911px;top:389px;width:19px;height:19px;background:#f4f4f4;border:1px solid #d6d6d8;"></div>
<div class="t " style="left:1935.4px;top:391.5px;font-size:16px;color:#a8a8a8;transform:scaleX(0.974);transform-origin:0 0;">Parcelar Sinal</div>
<div class="t " style="left:1386.8px;width:300px;text-align:right;top:424.9px;font-size:16px;color:#3c3c3c;transform:scaleX(0.979);transform-origin:100% 0;">Cond. Sinal</div>
<div class="r" style="left:1694px;top:419px;width:91px;height:28px;background:#f2f2f3;border:1px solid #c8c8ca;"></div>
<div class="r" style="left:1758px;top:420px;width:1px;height:26px;background:#dcdcde;"></div>
<svg class="r" style="left:1765px;top:429px;" width="12" height="7" viewBox="0 0 12 7"><path d="M0.5,0.5 L11,0.5 L5.75,6 Z" fill="#bbb"/></svg>
<div class="r" style="left:1797px;top:419px;width:237px;height:28px;background:#f2f2f3;border:1px solid #c8c8ca;"></div>
<div class="r" style="left:2007px;top:420px;width:1px;height:26px;background:#dcdcde;"></div>
<svg class="r" style="left:2014px;top:429px;" width="12" height="7" viewBox="0 0 12 7"><path d="M0.5,0.5 L11,0.5 L5.75,6 Z" fill="#bbb"/></svg>
<div class="r" style="left:1596px;top:452px;width:460px;height:29px;background:#f1f1f2;border:1px solid #bdbdbf;"></div>
<div class="r" style="left:1612px;top:453px;width:1px;height:27px;background:#c4c4c6;"></div>
<div class="r" style="left:1749px;top:453px;width:1px;height:27px;background:#c4c4c6;"></div>
<div class="r" style="left:1900px;top:453px;width:1px;height:27px;background:#c4c4c6;"></div>
<div class="t " style="left:1615.7px;top:460.3px;font-size:16px;color:#1e1e1e;transform:scaleX(0.996);transform-origin:0 0;">Valor</div>
<div class="t " style="left:1752.0px;top:460.3px;font-size:16px;color:#1e1e1e;transform:scaleX(1.023);transform-origin:0 0;">Dt. Vencimento</div>
<div class="t " style="left:1903.0px;top:460.3px;font-size:16px;color:#1e1e1e;transform:scaleX(1.040);transform-origin:0 0;">Centro Custo</div>
<div class="t " style="left:1713.6px;top:488.5px;font-size:16px;color:#b0b0b0;transform:scaleX(1.001);transform-origin:0 0;">Não possui dados para visualizar</div>
<div class="r" style="left:1596px;top:510px;width:179px;height:27px;background:#e2e2e4;"></div>
<svg class="r" style="left:1596px;top:510px;" width="180" height="27" viewBox="0 0 180 27"><path d="M14,8 L10,13 L14,18 Z" fill="#bdbdbd"/><path d="M37,8 L41,13 L37,18 Z" fill="#bdbdbd"/><path d="M57,13 H69 M63,7 V19" stroke="#b0b0b0" stroke-width="2.5"/><path d="M83,13 H96" stroke="#b0b0b0" stroke-width="2.5"/><path d="M109,13 L113,17 L120,9" stroke="#c0c0c0" stroke-width="2.5" fill="none"/><path d="M135,8 L145,18 M145,8 L135,18" stroke="#b0b0b0" stroke-width="2.5"/><path d="M160,15 Q163,7 172,10 L171,7 L175,13 L169,15 L170,12 Q164,10 162,16 Z" fill="#8a8a8a"/></svg>
<svg class="r" style="left:1858px;top:516px;" width="12" height="16" viewBox="0 0 12 16"><path d="M9,2 L3,8 L9,14" stroke="#d0d0d0" stroke-width="2" fill="none"/></svg>
<div class="r" style="left:1017px;top:552px;width:3px;height:3px;background:#707070;"></div>
<div class="r" style="left:1023px;top:552px;width:3px;height:3px;background:#707070;"></div>
<div class="r" style="left:1029px;top:552px;width:3px;height:3px;background:#707070;"></div>
<div class="r" style="left:1035px;top:552px;width:3px;height:3px;background:#707070;"></div>
<div class="r" style="left:1041px;top:552px;width:3px;height:3px;background:#707070;"></div>
<div class="r" style="left:0px;top:565px;width:2039px;height:36px;background:#f0f0f1;"></div>
<div class="r" style="left:0px;top:563px;width:69px;height:38px;background:#f2f2f3;border:1px solid #c6c6c8;border-left:none;border-bottom:none;"></div>
<div class="r" style="left:69px;top:600px;width:1970px;height:1px;background:#c6c6c8;"></div>
<div class="t " style="left:4.8px;top:577.0px;font-size:16px;color:#2a2a2a;transform:scaleX(0.986);transform-origin:0 0;">Pedidos</div>
<div class="t " style="left:74.5px;top:577.0px;font-size:16px;color:#3a3a3a;transform:scaleX(0.996);transform-origin:0 0;">Histórico</div>
<div class="t " style="left:148.6px;top:577.0px;font-size:16px;color:#3a3a3a;transform:scaleX(1.021);transform-origin:0 0;">Pedido de venda</div>
<div class="r" style="left:0px;top:601px;width:2039px;height:53px;background:linear-gradient(#e6e6e7,#ececed);"></div>
<div class="t " style="left:10.0px;top:621.5px;font-size:16px;color:#c9c9cb;transform:scaleX(1.020);transform-origin:0 0;">Arraste as colunas para agrupa-las</div>
<div class="r" style="left:0px;top:654px;width:2039px;height:2px;background:#a6a6a8;"></div>
<div class="r" style="left:0px;top:656px;width:2039px;height:27px;background:#f3f3f5;"></div>
<div class="r" style="left:0px;top:683px;width:15px;height:334px;background:#f0f0f1;"></div>
<div class="r" style="left:15px;top:683px;width:76px;height:334px;background:#fff8e2;"></div>
<div class="r" style="left:91px;top:683px;width:76px;height:334px;background:#fff8e2;"></div>
<div class="r" style="left:167px;top:683px;width:121px;height:334px;background:#ffe000;"></div>
<div class="r" style="left:288px;top:683px;width:99px;height:334px;background:#fff8e2;"></div>
<div class="r" style="left:387px;top:683px;width:159px;height:334px;background:#fff09c;"></div>
<div class="r" style="left:546px;top:683px;width:455px;height:334px;background:#fff8e2;"></div>
<div class="r" style="left:1001px;top:683px;width:159px;height:334px;background:#fff8e2;"></div>
<div class="r" style="left:1160px;top:683px;width:122px;height:334px;background:#fff8e2;"></div>
<div class="r" style="left:1282px;top:683px;width:136px;height:334px;background:#fff8e2;"></div>
<div class="r" style="left:1418px;top:683px;width:99px;height:334px;background:#fff8e2;"></div>
<div class="r" style="left:1517px;top:683px;width:98px;height:334px;background:#fff8e2;"></div>
<div class="r" style="left:1615px;top:683px;width:160px;height:334px;background:#a2c5f2;"></div>
<div class="r" style="left:1775px;top:683px;width:159px;height:334px;background:#fff07e;"></div>
<div class="r" style="left:1934px;top:683px;width:103px;height:334px;background:#a2c5f2;"></div>
<div class="r" style="left:2037px;top:656px;width:2px;height:361px;background:#f0f0f1;"></div>
<div class="r" style="left:0px;top:683px;width:2039px;height:1px;background:#b4b6ba;"></div>
<div class="r" style="left:0px;top:713px;width:1615px;height:1px;background:#c6bfa9;"></div>
<div class="r" style="left:1615px;top:713px;width:160px;height:1px;background:#a9b6c6;"></div>
<div class="r" style="left:1775px;top:713px;width:159px;height:1px;background:#d2c68c;"></div>
<div class="r" style="left:1934px;top:713px;width:103px;height:1px;background:#a9b6c6;"></div>
<div class="r" style="left:0px;top:744px;width:1615px;height:1px;background:#c6bfa9;"></div>
<div class="r" style="left:1615px;top:744px;width:160px;height:1px;background:#a9b6c6;"></div>
<div class="r" style="left:1775px;top:744px;width:159px;height:1px;background:#d2c68c;"></div>
<div class="r" style="left:1934px;top:744px;width:103px;height:1px;background:#a9b6c6;"></div>
<div class="r" style="left:0px;top:774px;width:1615px;height:1px;background:#c6bfa9;"></div>
<div class="r" style="left:1615px;top:774px;width:160px;height:1px;background:#a9b6c6;"></div>
<div class="r" style="left:1775px;top:774px;width:159px;height:1px;background:#d2c68c;"></div>
<div class="r" style="left:1934px;top:774px;width:103px;height:1px;background:#a9b6c6;"></div>
<div class="r" style="left:0px;top:804px;width:1615px;height:1px;background:#c6bfa9;"></div>
<div class="r" style="left:1615px;top:804px;width:160px;height:1px;background:#a9b6c6;"></div>
<div class="r" style="left:1775px;top:804px;width:159px;height:1px;background:#d2c68c;"></div>
<div class="r" style="left:1934px;top:804px;width:103px;height:1px;background:#a9b6c6;"></div>
<div class="r" style="left:0px;top:835px;width:1615px;height:1px;background:#c6bfa9;"></div>
<div class="r" style="left:1615px;top:835px;width:160px;height:1px;background:#a9b6c6;"></div>
<div class="r" style="left:1775px;top:835px;width:159px;height:1px;background:#d2c68c;"></div>
<div class="r" style="left:1934px;top:835px;width:103px;height:1px;background:#a9b6c6;"></div>
<div class="r" style="left:0px;top:865px;width:1615px;height:1px;background:#c6bfa9;"></div>
<div class="r" style="left:1615px;top:865px;width:160px;height:1px;background:#a9b6c6;"></div>
<div class="r" style="left:1775px;top:865px;width:159px;height:1px;background:#d2c68c;"></div>
<div class="r" style="left:1934px;top:865px;width:103px;height:1px;background:#a9b6c6;"></div>
<div class="r" style="left:0px;top:895px;width:1615px;height:1px;background:#c6bfa9;"></div>
<div class="r" style="left:1615px;top:895px;width:160px;height:1px;background:#a9b6c6;"></div>
<div class="r" style="left:1775px;top:895px;width:159px;height:1px;background:#d2c68c;"></div>
<div class="r" style="left:1934px;top:895px;width:103px;height:1px;background:#a9b6c6;"></div>
<div class="r" style="left:0px;top:926px;width:1615px;height:1px;background:#c6bfa9;"></div>
<div class="r" style="left:1615px;top:926px;width:160px;height:1px;background:#a9b6c6;"></div>
<div class="r" style="left:1775px;top:926px;width:159px;height:1px;background:#d2c68c;"></div>
<div class="r" style="left:1934px;top:926px;width:103px;height:1px;background:#a9b6c6;"></div>
<div class="r" style="left:0px;top:956px;width:1615px;height:1px;background:#c6bfa9;"></div>
<div class="r" style="left:1615px;top:956px;width:160px;height:1px;background:#a9b6c6;"></div>
<div class="r" style="left:1775px;top:956px;width:159px;height:1px;background:#d2c68c;"></div>
<div class="r" style="left:1934px;top:956px;width:103px;height:1px;background:#a9b6c6;"></div>
<div class="r" style="left:0px;top:986px;width:1615px;height:1px;background:#c6bfa9;"></div>
<div class="r" style="left:1615px;top:986px;width:160px;height:1px;background:#a9b6c6;"></div>
<div class="r" style="left:1775px;top:986px;width:159px;height:1px;background:#d2c68c;"></div>
<div class="r" style="left:1934px;top:986px;width:103px;height:1px;background:#a9b6c6;"></div>
<div class="r" style="left:0px;top:1017px;width:1615px;height:1px;background:#c6bfa9;"></div>
<div class="r" style="left:1615px;top:1017px;width:160px;height:1px;background:#a9b6c6;"></div>
<div class="r" style="left:1775px;top:1017px;width:159px;height:1px;background:#d2c68c;"></div>
<div class="r" style="left:1934px;top:1017px;width:103px;height:1px;background:#a9b6c6;"></div>
<div class="r" style="left:15px;top:656px;width:1px;height:361px;background:#c6bfaa;"></div>
<div class="r" style="left:91px;top:656px;width:1px;height:361px;background:#c6bfaa;"></div>
<div class="r" style="left:167px;top:656px;width:1px;height:361px;background:#c6bfaa;"></div>
<div class="r" style="left:288px;top:656px;width:1px;height:361px;background:#c6bfaa;"></div>
<div class="r" style="left:387px;top:656px;width:1px;height:361px;background:#c6bfaa;"></div>
<div class="r" style="left:546px;top:656px;width:1px;height:361px;background:#c6bfaa;"></div>
<div class="r" style="left:1001px;top:656px;width:1px;height:361px;background:#c6bfaa;"></div>
<div class="r" style="left:1160px;top:656px;width:1px;height:361px;background:#c6bfaa;"></div>
<div class="r" style="left:1282px;top:656px;width:1px;height:361px;background:#c6bfaa;"></div>
<div class="r" style="left:1418px;top:656px;width:1px;height:361px;background:#c6bfaa;"></div>
<div class="r" style="left:1517px;top:656px;width:1px;height:361px;background:#c6bfaa;"></div>
<div class="r" style="left:1615px;top:656px;width:1px;height:361px;background:#c6bfaa;"></div>
<div class="r" style="left:1775px;top:656px;width:1px;height:361px;background:#c6bfaa;"></div>
<div class="r" style="left:1934px;top:656px;width:1px;height:361px;background:#c6bfaa;"></div>
<div class="r" style="left:15px;top:656px;width:1px;height:27px;background:#c6c6c8;"></div>
<div class="r" style="left:91px;top:656px;width:1px;height:27px;background:#c6c6c8;"></div>
<div class="r" style="left:167px;top:656px;width:1px;height:27px;background:#c6c6c8;"></div>
<div class="r" style="left:288px;top:656px;width:1px;height:27px;background:#c6c6c8;"></div>
<div class="r" style="left:387px;top:656px;width:1px;height:27px;background:#c6c6c8;"></div>
<div class="r" style="left:546px;top:656px;width:1px;height:27px;background:#c6c6c8;"></div>
<div class="r" style="left:1001px;top:656px;width:1px;height:27px;background:#c6c6c8;"></div>
<div class="r" style="left:1160px;top:656px;width:1px;height:27px;background:#c6c6c8;"></div>
<div class="r" style="left:1282px;top:656px;width:1px;height:27px;background:#c6c6c8;"></div>
<div class="r" style="left:1418px;top:656px;width:1px;height:27px;background:#c6c6c8;"></div>
<div class="r" style="left:1517px;top:656px;width:1px;height:27px;background:#c6c6c8;"></div>
<div class="r" style="left:1615px;top:656px;width:1px;height:27px;background:#c6c6c8;"></div>
<div class="r" style="left:1775px;top:656px;width:1px;height:27px;background:#c6c6c8;"></div>
<div class="r" style="left:1934px;top:656px;width:1px;height:27px;background:#c6c6c8;"></div>
<div class="t " style="left:18.0px;top:663.5px;font-size:16px;color:#1a1a1a;transform:scaleX(0.986);transform-origin:0 0;">Enviado</div>
<div class="t " style="left:94.0px;top:663.5px;font-size:16px;color:#1a1a1a;transform:scaleX(1.018);transform-origin:0 0;">Impresso</div>
<div class="t " style="left:170.0px;top:663.5px;font-size:16px;color:#1a1a1a;transform:scaleX(1.087);transform-origin:0 0;">Origem</div>
<div class="t " style="left:291.0px;top:663.5px;font-size:16px;color:#1a1a1a;transform:scaleX(0.964);transform-origin:0 0;">Pedido</div>
<div class="t " style="left:390.0px;top:663.5px;font-size:16px;color:#1a1a1a;transform:scaleX(1.030);transform-origin:0 0;">Cód. do Produto</div>
<div class="t " style="left:549.0px;top:663.5px;font-size:16px;color:#1a1a1a;transform:scaleX(0.984);transform-origin:0 0;">Descrição</div>
<div class="t " style="left:1004.0px;top:663.5px;font-size:16px;color:#1a1a1a;transform:scaleX(0.966);transform-origin:0 0;">Fornecedor</div>
<div class="t " style="left:1163.0px;top:663.5px;font-size:16px;color:#1a1a1a;transform:scaleX(1.029);transform-origin:0 0;">Data Entrega</div>
<div class="t " style="left:1285.0px;top:663.5px;font-size:16px;color:#1a1a1a;transform:scaleX(1.011);transform-origin:0 0;">Data Negociada</div>
<div class="t " style="left:1421.0px;top:663.5px;font-size:16px;color:#1a1a1a;transform:scaleX(1.024);transform-origin:0 0;">Unidade</div>
<div class="t " style="left:1520.0px;top:663.5px;font-size:16px;color:#1a1a1a;transform:scaleX(1.002);transform-origin:0 0;">Moeda</div>
<div class="t " style="left:1618.0px;top:663.5px;font-size:16px;color:#1a1a1a;transform:scaleX(1.068);transform-origin:0 0;">Qtde Pedido</div>
<div class="t " style="left:1778.0px;top:663.5px;font-size:16px;color:#1a1a1a;transform:scaleX(1.057);transform-origin:0 0;">Qtde Entregue</div>
<div class="t " style="left:1937.0px;top:663.5px;font-size:16px;color:#1a1a1a;transform:scaleX(0.978);transform-origin:0 0;">Saldo</div>
<div class="r" style="left:44px;top:689px;width:19px;height:19px;background:#fff;border:1px solid #a8a498;"></div>
<div class="r" style="left:120px;top:689px;width:19px;height:19px;background:#fff;border:1px solid #a8a498;"></div>
<div class="t " style="left:170.6px;top:691.0px;font-size:16px;color:#1a1a1a;transform:scaleX(0.951);transform-origin:0 0;">CONTRATO</div>
<div class="t " style="left:293.4px;top:691.0px;font-size:16px;color:#1a1a1a;transform:scaleX(0.910);transform-origin:0 0;">15</div>
<div class="t " style="left:390.5px;top:691.0px;font-size:16px;color:#1a1a1a;transform:scaleX(1.012);transform-origin:0 0;">00025</div>
<div class="t " style="left:549.3px;top:691.0px;font-size:16px;color:#1a1a1a;transform:scaleX(0.991);transform-origin:0 0;">Chapa de Aço 10mm</div>
<div class="t " style="left:1004.3px;top:691.0px;font-size:16px;color:#1a1a1a;transform:scaleX(1.014);transform-origin:0 0;">F00002</div>
<div class="t " style="left:1164.5px;top:691.0px;font-size:16px;color:#1a1a1a;transform:scaleX(1.049);transform-origin:0 0;">28/04/2017</div>
<div class="t " style="left:1422.0px;top:691.0px;font-size:16px;color:#1a1a1a;transform:scaleX(0.953);transform-origin:0 0;">Quilo</div>
<div class="t " style="left:1519.8px;top:691.0px;font-size:16px;color:#1a1a1a;transform:scaleX(0.972);transform-origin:0 0;">Real</div>
<div class="t " style="left:1620.5px;top:691.0px;font-size:16px;color:#13233d;transform:scaleX(1.018);transform-origin:0 0;">10,000000</div>
<div class="t " style="left:1777.8px;top:691.0px;font-size:16px;color:#1a1a1a;transform:scaleX(1.012);transform-origin:0 0;">0</div>
<div class="t " style="left:1938.8px;top:691.0px;font-size:16px;color:#13233d;transform:scaleX(0.999);transform-origin:0 0;">10,00</div>
<div class="r" style="left:44px;top:719px;width:19px;height:19px;background:#fff;border:1px solid #a8a498;"></div>
<div class="r" style="left:120px;top:719px;width:19px;height:19px;background:#fff;border:1px solid #a8a498;"></div>
<div class="t " style="left:170.6px;top:721.3px;font-size:16px;color:#1a1a1a;transform:scaleX(0.951);transform-origin:0 0;">CONTRATO</div>
<div class="t " style="left:293.4px;top:721.3px;font-size:16px;color:#1a1a1a;transform:scaleX(0.910);transform-origin:0 0;">15</div>
<div class="t " style="left:390.5px;top:721.3px;font-size:16px;color:#1a1a1a;transform:scaleX(1.012);transform-origin:0 0;">00025</div>
<div class="t " style="left:549.3px;top:721.3px;font-size:16px;color:#1a1a1a;transform:scaleX(0.991);transform-origin:0 0;">Chapa de Aço 10mm</div>
<div class="t " style="left:1004.3px;top:721.3px;font-size:16px;color:#1a1a1a;transform:scaleX(1.014);transform-origin:0 0;">F00002</div>
<div class="t " style="left:1164.5px;top:721.3px;font-size:16px;color:#1a1a1a;transform:scaleX(1.049);transform-origin:0 0;">28/03/2017</div>
<div class="t " style="left:1422.0px;top:721.3px;font-size:16px;color:#1a1a1a;transform:scaleX(0.953);transform-origin:0 0;">Quilo</div>
<div class="t " style="left:1519.8px;top:721.3px;font-size:16px;color:#1a1a1a;transform:scaleX(0.972);transform-origin:0 0;">Real</div>
<div class="t " style="left:1620.5px;top:721.3px;font-size:16px;color:#13233d;transform:scaleX(1.018);transform-origin:0 0;">10,000000</div>
<div class="t " style="left:1777.8px;top:721.3px;font-size:16px;color:#1a1a1a;transform:scaleX(1.012);transform-origin:0 0;">0</div>
<div class="t " style="left:1938.8px;top:721.3px;font-size:16px;color:#13233d;transform:scaleX(0.999);transform-origin:0 0;">10,00</div>
<div class="r" style="left:44px;top:750px;width:19px;height:19px;background:#fff;border:1px solid #a8a498;"></div>
<div class="r" style="left:120px;top:750px;width:19px;height:19px;background:#fff;border:1px solid #a8a498;"></div>
<div class="t " style="left:170.6px;top:751.6px;font-size:16px;color:#1a1a1a;transform:scaleX(0.951);transform-origin:0 0;">CONTRATO</div>
<div class="t " style="left:293.4px;top:751.6px;font-size:16px;color:#1a1a1a;transform:scaleX(0.910);transform-origin:0 0;">15</div>
<div class="t " style="left:390.5px;top:751.6px;font-size:16px;color:#1a1a1a;transform:scaleX(1.012);transform-origin:0 0;">00025</div>
<div class="t " style="left:549.3px;top:751.6px;font-size:16px;color:#1a1a1a;transform:scaleX(0.991);transform-origin:0 0;">Chapa de Aço 10mm</div>
<div class="t " style="left:1004.3px;top:751.6px;font-size:16px;color:#1a1a1a;transform:scaleX(1.014);transform-origin:0 0;">F00002</div>
<div class="t " style="left:1164.5px;top:751.6px;font-size:16px;color:#1a1a1a;transform:scaleX(1.049);transform-origin:0 0;">28/02/2017</div>
<div class="t " style="left:1422.0px;top:751.6px;font-size:16px;color:#1a1a1a;transform:scaleX(0.953);transform-origin:0 0;">Quilo</div>
<div class="t " style="left:1519.8px;top:751.6px;font-size:16px;color:#1a1a1a;transform:scaleX(0.972);transform-origin:0 0;">Real</div>
<div class="t " style="left:1620.5px;top:751.6px;font-size:16px;color:#13233d;transform:scaleX(1.018);transform-origin:0 0;">10,000000</div>
<div class="t " style="left:1777.8px;top:751.6px;font-size:16px;color:#1a1a1a;transform:scaleX(1.012);transform-origin:0 0;">0</div>
<div class="t " style="left:1938.8px;top:751.6px;font-size:16px;color:#13233d;transform:scaleX(0.999);transform-origin:0 0;">10,00</div>
<div class="r" style="left:44px;top:780px;width:19px;height:19px;background:#fff;border:1px solid #a8a498;"></div>
<div class="r" style="left:120px;top:780px;width:19px;height:19px;background:#fff;border:1px solid #a8a498;"></div>
<div class="t " style="left:170.6px;top:781.9px;font-size:16px;color:#1a1a1a;transform:scaleX(0.951);transform-origin:0 0;">CONTRATO</div>
<div class="t " style="left:293.4px;top:781.9px;font-size:16px;color:#1a1a1a;transform:scaleX(0.910);transform-origin:0 0;">15</div>
<div class="t " style="left:390.5px;top:781.9px;font-size:16px;color:#1a1a1a;transform:scaleX(1.012);transform-origin:0 0;">00025</div>
<div class="t " style="left:549.3px;top:781.9px;font-size:16px;color:#1a1a1a;transform:scaleX(0.991);transform-origin:0 0;">Chapa de Aço 10mm</div>
<div class="t " style="left:1004.3px;top:781.9px;font-size:16px;color:#1a1a1a;transform:scaleX(1.014);transform-origin:0 0;">F00002</div>
<div class="t " style="left:1164.5px;top:781.9px;font-size:16px;color:#1a1a1a;transform:scaleX(1.049);transform-origin:0 0;">29/01/2017</div>
<div class="t " style="left:1422.0px;top:781.9px;font-size:16px;color:#1a1a1a;transform:scaleX(0.953);transform-origin:0 0;">Quilo</div>
<div class="t " style="left:1519.8px;top:781.9px;font-size:16px;color:#1a1a1a;transform:scaleX(0.972);transform-origin:0 0;">Real</div>
<div class="t " style="left:1620.5px;top:781.9px;font-size:16px;color:#13233d;transform:scaleX(1.018);transform-origin:0 0;">10,000000</div>
<div class="t " style="left:1777.8px;top:781.9px;font-size:16px;color:#1a1a1a;transform:scaleX(1.012);transform-origin:0 0;">0</div>
<div class="t " style="left:1938.8px;top:781.9px;font-size:16px;color:#13233d;transform:scaleX(0.999);transform-origin:0 0;">10,00</div>
<div class="r" style="left:44px;top:810px;width:19px;height:19px;background:#fff;border:1px solid #a8a498;"></div>
<div class="r" style="left:120px;top:810px;width:19px;height:19px;background:#fff;border:1px solid #a8a498;"></div>
<div class="r" style="left:168px;top:805px;width:120px;height:29px;background:#e4eefa;border:1.5px dotted #222;"></div>
<svg class="r" style="left:3px;top:814px;" width="8" height="11" viewBox="0 0 8 11"><path d="M1,0.5 L7,5.5 L1,10.5 Z" fill="#555"/></svg>
<div class="t " style="left:170.6px;top:812.3px;font-size:16px;color:#24344e;transform:scaleX(0.951);transform-origin:0 0;">CONTRATO</div>
<div class="t " style="left:293.4px;top:812.3px;font-size:16px;color:#1a1a1a;transform:scaleX(0.910);transform-origin:0 0;">15</div>
<div class="t " style="left:390.5px;top:812.3px;font-size:16px;color:#1a1a1a;transform:scaleX(1.012);transform-origin:0 0;">00025</div>
<div class="t " style="left:549.3px;top:812.3px;font-size:16px;color:#1a1a1a;transform:scaleX(0.991);transform-origin:0 0;">Chapa de Aço 10mm</div>
<div class="t " style="left:1004.3px;top:812.3px;font-size:16px;color:#1a1a1a;transform:scaleX(1.014);transform-origin:0 0;">F00002</div>
<div class="t " style="left:1164.5px;top:812.3px;font-size:16px;color:#1a1a1a;transform:scaleX(1.049);transform-origin:0 0;">29/12/2016</div>
<div class="t " style="left:1422.0px;top:812.3px;font-size:16px;color:#1a1a1a;transform:scaleX(0.953);transform-origin:0 0;">Quilo</div>
<div class="t " style="left:1519.8px;top:812.3px;font-size:16px;color:#1a1a1a;transform:scaleX(0.972);transform-origin:0 0;">Real</div>
<div class="t " style="left:1620.5px;top:812.3px;font-size:16px;color:#13233d;transform:scaleX(1.018);transform-origin:0 0;">10,000000</div>
<div class="t " style="left:1777.8px;top:812.3px;font-size:16px;color:#1a1a1a;transform:scaleX(1.012);transform-origin:0 0;">0</div>
<div class="t " style="left:1938.8px;top:812.3px;font-size:16px;color:#13233d;transform:scaleX(0.999);transform-origin:0 0;">10,00</div>
<div class="r" style="left:44px;top:841px;width:19px;height:19px;background:#fff;border:1px solid #a8a498;"></div>
<div class="r" style="left:120px;top:841px;width:19px;height:19px;background:#fff;border:1px solid #a8a498;"></div>
<div class="t " style="left:170.6px;top:842.6px;font-size:16px;color:#1a1a1a;transform:scaleX(0.951);transform-origin:0 0;">CONTRATO</div>
<div class="t " style="left:293.4px;top:842.6px;font-size:16px;color:#1a1a1a;transform:scaleX(0.910);transform-origin:0 0;">15</div>
<div class="t " style="left:390.5px;top:842.6px;font-size:16px;color:#1a1a1a;transform:scaleX(1.012);transform-origin:0 0;">00025</div>
<div class="t " style="left:549.3px;top:842.6px;font-size:16px;color:#1a1a1a;transform:scaleX(0.991);transform-origin:0 0;">Chapa de Aço 10mm</div>
<div class="t " style="left:1004.3px;top:842.6px;font-size:16px;color:#1a1a1a;transform:scaleX(1.014);transform-origin:0 0;">F00002</div>
<div class="t " style="left:1164.5px;top:842.6px;font-size:16px;color:#1a1a1a;transform:scaleX(1.065);transform-origin:0 0;">29/11/2016</div>
<div class="t " style="left:1422.0px;top:842.6px;font-size:16px;color:#1a1a1a;transform:scaleX(0.953);transform-origin:0 0;">Quilo</div>
<div class="t " style="left:1519.8px;top:842.6px;font-size:16px;color:#1a1a1a;transform:scaleX(0.972);transform-origin:0 0;">Real</div>
<div class="t " style="left:1620.5px;top:842.6px;font-size:16px;color:#13233d;transform:scaleX(1.018);transform-origin:0 0;">10,000000</div>
<div class="t " style="left:1777.8px;top:842.6px;font-size:16px;color:#1a1a1a;transform:scaleX(1.012);transform-origin:0 0;">0</div>
<div class="t " style="left:1938.8px;top:842.6px;font-size:16px;color:#13233d;transform:scaleX(0.999);transform-origin:0 0;">10,00</div>
<div class="r" style="left:44px;top:871px;width:19px;height:19px;background:#fff;border:1px solid #a8a498;"></div>
<div class="r" style="left:120px;top:871px;width:19px;height:19px;background:#fff;border:1px solid #a8a498;"></div>
<div class="t " style="left:170.6px;top:872.9px;font-size:16px;color:#1a1a1a;transform:scaleX(0.951);transform-origin:0 0;">CONTRATO</div>
<div class="t " style="left:293.4px;top:872.9px;font-size:16px;color:#1a1a1a;transform:scaleX(0.910);transform-origin:0 0;">15</div>
<div class="t " style="left:390.5px;top:872.9px;font-size:16px;color:#1a1a1a;transform:scaleX(1.012);transform-origin:0 0;">00025</div>
<div class="t " style="left:549.3px;top:872.9px;font-size:16px;color:#1a1a1a;transform:scaleX(0.991);transform-origin:0 0;">Chapa de Aço 10mm</div>
<div class="t " style="left:1004.3px;top:872.9px;font-size:16px;color:#1a1a1a;transform:scaleX(1.014);transform-origin:0 0;">F00002</div>
<div class="t " style="left:1164.5px;top:872.9px;font-size:16px;color:#1a1a1a;transform:scaleX(1.049);transform-origin:0 0;">29/10/2016</div>
<div class="t " style="left:1422.0px;top:872.9px;font-size:16px;color:#1a1a1a;transform:scaleX(0.953);transform-origin:0 0;">Quilo</div>
<div class="t " style="left:1519.8px;top:872.9px;font-size:16px;color:#1a1a1a;transform:scaleX(0.972);transform-origin:0 0;">Real</div>
<div class="t " style="left:1620.5px;top:872.9px;font-size:16px;color:#13233d;transform:scaleX(1.018);transform-origin:0 0;">10,000000</div>
<div class="t " style="left:1777.8px;top:872.9px;font-size:16px;color:#1a1a1a;transform:scaleX(1.012);transform-origin:0 0;">0</div>
<div class="t " style="left:1938.8px;top:872.9px;font-size:16px;color:#13233d;transform:scaleX(0.999);transform-origin:0 0;">10,00</div>
<div class="r" style="left:44px;top:901px;width:19px;height:19px;background:#fff;border:1px solid #a8a498;"></div>
<div class="r" style="left:120px;top:901px;width:19px;height:19px;background:#fff;border:1px solid #a8a498;"></div>
<div class="t " style="left:170.6px;top:903.3px;font-size:16px;color:#1a1a1a;transform:scaleX(0.951);transform-origin:0 0;">CONTRATO</div>
<div class="t " style="left:293.4px;top:903.3px;font-size:16px;color:#1a1a1a;transform:scaleX(0.910);transform-origin:0 0;">15</div>
<div class="t " style="left:390.5px;top:903.3px;font-size:16px;color:#1a1a1a;transform:scaleX(1.012);transform-origin:0 0;">00025</div>
<div class="t " style="left:549.3px;top:903.3px;font-size:16px;color:#1a1a1a;transform:scaleX(0.991);transform-origin:0 0;">Chapa de Aço 10mm</div>
<div class="t " style="left:1004.3px;top:903.3px;font-size:16px;color:#1a1a1a;transform:scaleX(1.014);transform-origin:0 0;">F00002</div>
<div class="t " style="left:1164.5px;top:903.3px;font-size:16px;color:#1a1a1a;transform:scaleX(1.049);transform-origin:0 0;">29/09/2016</div>
<div class="t " style="left:1422.0px;top:903.3px;font-size:16px;color:#1a1a1a;transform:scaleX(0.953);transform-origin:0 0;">Quilo</div>
<div class="t " style="left:1519.8px;top:903.3px;font-size:16px;color:#1a1a1a;transform:scaleX(0.972);transform-origin:0 0;">Real</div>
<div class="t " style="left:1620.5px;top:903.3px;font-size:16px;color:#13233d;transform:scaleX(1.018);transform-origin:0 0;">10,000000</div>
<div class="t " style="left:1777.8px;top:903.3px;font-size:16px;color:#1a1a1a;transform:scaleX(1.012);transform-origin:0 0;">0</div>
<div class="t " style="left:1938.8px;top:903.3px;font-size:16px;color:#13233d;transform:scaleX(0.999);transform-origin:0 0;">10,00</div>
<div class="r" style="left:44px;top:932px;width:19px;height:19px;background:#fff;border:1px solid #a8a498;"></div>
<div class="r" style="left:120px;top:932px;width:19px;height:19px;background:#fff;border:1px solid #a8a498;"></div>
<div class="t " style="left:170.6px;top:933.6px;font-size:16px;color:#1a1a1a;transform:scaleX(0.951);transform-origin:0 0;">CONTRATO</div>
<div class="t " style="left:293.4px;top:933.6px;font-size:16px;color:#1a1a1a;transform:scaleX(0.910);transform-origin:0 0;">15</div>
<div class="t " style="left:390.5px;top:933.6px;font-size:16px;color:#1a1a1a;transform:scaleX(1.012);transform-origin:0 0;">00025</div>
<div class="t " style="left:549.3px;top:933.6px;font-size:16px;color:#1a1a1a;transform:scaleX(0.991);transform-origin:0 0;">Chapa de Aço 10mm</div>
<div class="t " style="left:1004.3px;top:933.6px;font-size:16px;color:#1a1a1a;transform:scaleX(1.014);transform-origin:0 0;">F00002</div>
<div class="t " style="left:1164.5px;top:933.6px;font-size:16px;color:#1a1a1a;transform:scaleX(1.049);transform-origin:0 0;">29/08/2016</div>
<div class="t " style="left:1422.0px;top:933.6px;font-size:16px;color:#1a1a1a;transform:scaleX(0.953);transform-origin:0 0;">Quilo</div>
<div class="t " style="left:1519.8px;top:933.6px;font-size:16px;color:#1a1a1a;transform:scaleX(0.972);transform-origin:0 0;">Real</div>
<div class="t " style="left:1620.5px;top:933.6px;font-size:16px;color:#13233d;transform:scaleX(1.018);transform-origin:0 0;">10,000000</div>
<div class="t " style="left:1777.8px;top:933.6px;font-size:16px;color:#1a1a1a;transform:scaleX(1.012);transform-origin:0 0;">0</div>
<div class="t " style="left:1938.8px;top:933.6px;font-size:16px;color:#13233d;transform:scaleX(0.999);transform-origin:0 0;">10,00</div>
<div class="r" style="left:44px;top:962px;width:19px;height:19px;background:#fff;border:1px solid #a8a498;"></div>
<div class="r" style="left:120px;top:962px;width:19px;height:19px;background:#fff;border:1px solid #a8a498;"></div>
<div class="t " style="left:170.6px;top:963.9px;font-size:16px;color:#1a1a1a;transform:scaleX(0.962);transform-origin:0 0;">COTAÇÃO</div>
<div class="t " style="left:293.4px;top:963.9px;font-size:16px;color:#1a1a1a;transform:scaleX(0.910);transform-origin:0 0;">13</div>
<div class="t " style="left:390.5px;top:963.9px;font-size:16px;color:#1a1a1a;transform:scaleX(1.012);transform-origin:0 0;">00006</div>
<div class="t " style="left:549.3px;top:963.9px;font-size:16px;color:#1a1a1a;transform:scaleX(1.006);transform-origin:0 0;">Corpo Metálico 2,5mm x 8,0mm</div>
<div class="t " style="left:1004.3px;top:963.9px;font-size:16px;color:#1a1a1a;transform:scaleX(1.014);transform-origin:0 0;">F00005</div>
<div class="t " style="left:1164.5px;top:963.9px;font-size:16px;color:#1a1a1a;transform:scaleX(1.049);transform-origin:0 0;">16/08/2016</div>
<div class="t " style="left:1422.0px;top:963.9px;font-size:16px;color:#1a1a1a;transform:scaleX(1.007);transform-origin:0 0;">Unidade</div>
<div class="t " style="left:1519.8px;top:963.9px;font-size:16px;color:#1a1a1a;transform:scaleX(0.972);transform-origin:0 0;">Real</div>
<div class="t " style="left:1620.5px;top:963.9px;font-size:16px;color:#13233d;transform:scaleX(1.019);transform-origin:0 0;">1,000000</div>
<div class="t " style="left:1777.8px;top:963.9px;font-size:16px;color:#1a1a1a;transform:scaleX(1.012);transform-origin:0 0;">0</div>
<div class="t " style="left:1938.8px;top:963.9px;font-size:16px;color:#13233d;transform:scaleX(0.996);transform-origin:0 0;">1,00</div>
<div class="r" style="left:44px;top:992px;width:19px;height:19px;background:#fff;border:1px solid #a8a498;"></div>
<div class="r" style="left:120px;top:992px;width:19px;height:19px;background:#fff;border:1px solid #a8a498;"></div>
<div class="t " style="left:170.6px;top:994.3px;font-size:16px;color:#1a1a1a;transform:scaleX(0.902);transform-origin:0 0;">COMPRAS</div>
<div class="t " style="left:293.4px;top:994.3px;font-size:16px;color:#1a1a1a;transform:scaleX(0.910);transform-origin:0 0;">12</div>
<div class="t " style="left:390.5px;top:994.3px;font-size:16px;color:#1a1a1a;transform:scaleX(1.012);transform-origin:0 0;">00001</div>
<div class="t " style="left:549.3px;top:994.3px;font-size:16px;color:#1a1a1a;transform:scaleX(0.938);transform-origin:0 0;">BORRACHA BRANCA ESCOLAR</div>
<div class="t " style="left:1004.3px;top:994.3px;font-size:16px;color:#1a1a1a;transform:scaleX(1.014);transform-origin:0 0;">F00001</div>
<div class="t " style="left:1164.5px;top:994.3px;font-size:16px;color:#1a1a1a;transform:scaleX(1.049);transform-origin:0 0;">29/08/2016</div>
<div class="t " style="left:1422.0px;top:994.3px;font-size:16px;color:#1a1a1a;transform:scaleX(1.007);transform-origin:0 0;">Unidade</div>
<div class="t " style="left:1519.8px;top:994.3px;font-size:16px;color:#1a1a1a;transform:scaleX(0.972);transform-origin:0 0;">Real</div>
<div class="t " style="left:1620.5px;top:994.3px;font-size:16px;color:#13233d;transform:scaleX(1.019);transform-origin:0 0;">1,000000</div>
<div class="t " style="left:1777.8px;top:994.3px;font-size:16px;color:#1a1a1a;transform:scaleX(1.012);transform-origin:0 0;">0</div>
<div class="t " style="left:1938.8px;top:994.3px;font-size:16px;color:#13233d;transform:scaleX(0.996);transform-origin:0 0;">1,00</div>
<div class="r" style="left:0px;top:1018px;width:2039px;height:7px;background:#ececee;"></div>
<div class="r" style="left:24px;top:1018px;width:799px;height:7px;background:#cfcfd1;"></div>
</body></html>
